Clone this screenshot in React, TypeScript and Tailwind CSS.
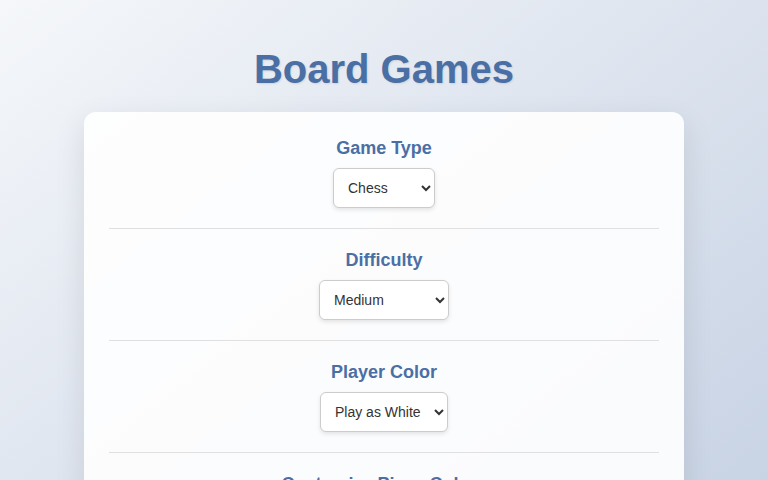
import React, { useState } from "react";

// 設定セクション：見出し＋セレクト
const Section: React.FC<{ title: string; first?: boolean; children: React.ReactNode }> = ({ title, first, children }) => (
  <div className={`flex flex-col items-center pb-5 border-b border-[#e0e0e0] ${first ? "" : "pt-5"}`}>
    <h2 className="text-[18px] leading-[23px] font-bold text-[#4a6fa5] mb-2">{title}</h2>
    {children}
  </div>
);

const selectCls =
  "h-10 pl-[10px] pr-1 text-[14px] text-[#333] bg-white border border-[#ccc] rounded-md shadow-[0_2px_4px_rgba(0,0,0,0.1)] cursor-pointer";

export default function App() {
  const [game, setGame] = useState("chess");
  const [level, setLevel] = useState("medium");
  const [side, setSide] = useState("white");
  const [white, setWhite] = useState("#ffffff");
  const [black, setBlack] = useState("#000000");

  return (
    <div
      className="min-h-screen pt-[46px] pb-10 px-5 bg-gradient-to-br from-[#f5f7fa] to-[#c3cfe2]"
      style={{ fontFamily: '"Liberation Sans", Arial, sans-serif' }}
    >
      <h1 className="text-center text-[40px] leading-[46px] font-bold text-[#4a6fa5] mb-5 [text-shadow:1px_1px_2px_rgba(0,0,0,0.1)]">
        Board Games
      </h1>

      <div className="mx-auto w-[600px] bg-white/90 rounded-xl shadow-[0_10px_30px_rgba(0,0,0,0.1)] p-[25px]">
        <Section title="Game Type" first>
          <select value={game} onChange={(e) => setGame(e.target.value)} className={`${selectCls} w-[102px]`}>
            <option value="chess">Chess</option>
            <option value="checkers">Checkers</option>
          </select>
        </Section>

        <Section title="Difficulty">
          <select value={level} onChange={(e) => setLevel(e.target.value)} className={`${selectCls} w-[130px]`}>
            <option value="easy">Easy</option>
            <option value="medium">Medium</option>
            <option value="hard">Hard</option>
            <option value="expert">Expert (Master)</option>
          </select>
        </Section>

        <Section title="Player Color">
          <select value={side} onChange={(e) => setSide(e.target.value)} className={`${selectCls} w-[128px]`}>
            <option value="white">Play as White</option>
            <option value="black">Play as Black</option>
          </select>
        </Section>

        <div className="flex flex-col items-center pt-5">
          <h2 className="text-[18px] leading-[23px] font-bold text-[#4a6fa5] mb-2">Customize Piece Colors</h2>
          <div className="flex gap-6 text-[14px] text-[#333]">
            <label className="flex items-center gap-2">
              White Pieces
              <input type="color" value={white} onChange={(e) => setWhite(e.target.value)} className="w-10 h-8" />
            </label>
            <label className="flex items-center gap-2">
              Black Pieces
              <input type="color" value={black} onChange={(e) => setBlack(e.target.value)} className="w-10 h-8" />
            </label>
          </div>
        </div>
      </div>
    </div>
  );
}
